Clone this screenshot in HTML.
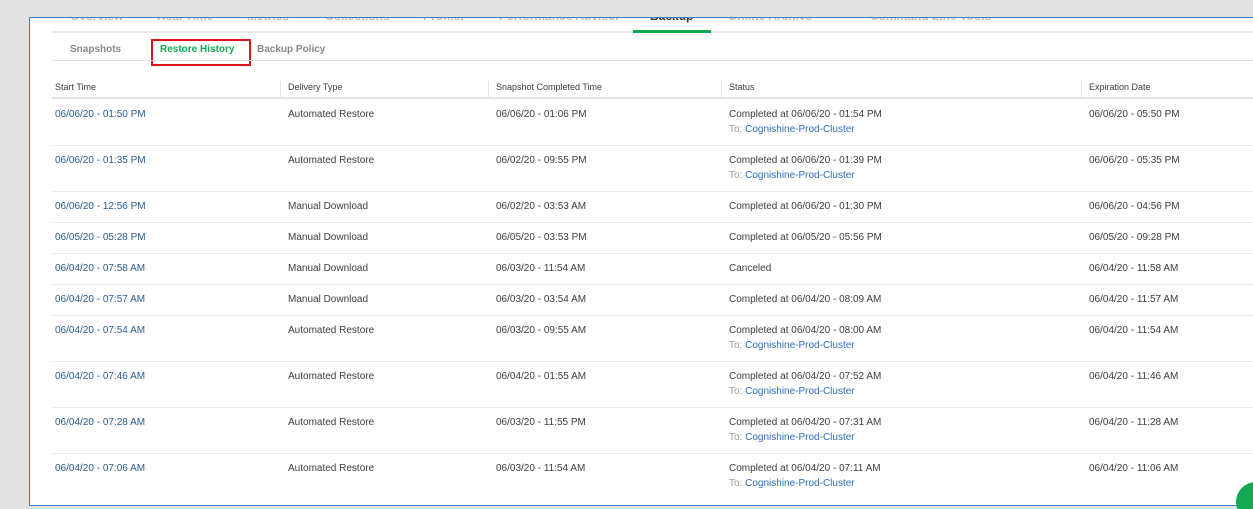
<!DOCTYPE html>
<html><head><style>
*{margin:0;padding:0;box-sizing:border-box}
html,body{width:1253px;height:509px;overflow:hidden}
body{background:#e2e2e2;font-family:"Liberation Sans",Arial,sans-serif;position:relative}
.panel{position:absolute;left:29px;top:17px;width:1230px;height:489px;background:#fff;border-left:1px solid #3d7fc4;border-top:1px solid #3d7fc4;border-bottom:1px solid #3d7fc4;overflow:hidden}
.a{position:absolute;white-space:nowrap}
.nav{top:-9px;font-size:12px;color:#bbb;font-weight:bold}
.t{font-size:10px;color:#3d3d3d}
.d{font-size:10px;color:#2a5b8c}
.l{color:#2d6fb8}
.g{color:#999}
.hl{position:absolute;height:1px;background:#ececec;left:22px;width:1210px}
.sep{position:absolute;top:63px;width:1px;height:16px;background:#e4e4e4}
</style></head><body>
<div class="panel">
<div class="a nav" style="left:40px">Overview</div>
<div class="a nav" style="left:127px">Real Time</div>
<div class="a nav" style="left:217px">Metrics</div>
<div class="a nav" style="left:295px">Collections</div>
<div class="a nav" style="left:393px">Profiler</div>
<div class="a nav" style="left:469px">Performance Advisor</div>
<div class="a nav" style="left:620px;color:#333">Backup</div>
<div class="a nav" style="left:698px">Online Archive</div>
<div class="a nav" style="left:840px">Command Line Tools</div>
<div style="position:absolute;left:22px;top:13px;width:1210px;height:2px;background:#e8e8e8"></div>
<div style="position:absolute;left:603px;top:12px;width:78px;height:3px;background:#13aa52"></div>
<div class="a" style="left:40px;top:26px;font-size:10px;color:#888;font-weight:bold">Snapshots</div>
<div class="a" style="left:130px;top:26px;font-size:10px;color:#13aa52;font-weight:bold">Restore History</div>
<div class="a" style="left:227px;top:26px;font-size:10px;color:#888;font-weight:bold">Backup Policy</div>
<div style="position:absolute;left:121px;top:21px;width:100px;height:27px;border:2px solid #e0141c"></div>
<div class="hl" style="top:42px;background:#e2e2e2"></div>
<div class="a t" style="left:25px;top:64px;font-size:9px">Start Time</div>
<div class="a t" style="left:258px;top:64px;font-size:9px">Delivery Type</div>
<div class="a t" style="left:466px;top:64px;font-size:9px">Snapshot Completed Time</div>
<div class="a t" style="left:699px;top:64px;font-size:9px">Status</div>
<div class="a t" style="left:1059px;top:64px;font-size:9px">Expiration Date</div>
<div class="sep" style="left:250px"></div><div class="sep" style="left:458px"></div><div class="sep" style="left:691px"></div><div class="sep" style="left:1051px"></div>
<div class="hl" style="top:79px;height:2px;background:#e3e3e3"></div>
<div id="rows"></div>
</div>
<div style="position:absolute;left:1236px;top:482px;width:40px;height:40px;border-radius:50%;background:#13aa52"></div>
<script>
var R=[["06/06/20 - 01:50 PM","Automated Restore","06/06/20 - 01:06 PM","Completed at 06/06/20 - 01:54 PM",1,"06/06/20 - 05:50 PM"],
["06/06/20 - 01:35 PM","Automated Restore","06/02/20 - 09:55 PM","Completed at 06/06/20 - 01:39 PM",1,"06/06/20 - 05:35 PM"],
["06/06/20 - 12:56 PM","Manual Download","06/02/20 - 03:53 AM","Completed at 06/06/20 - 01:30 PM",0,"06/06/20 - 04:56 PM"],
["06/05/20 - 05:28 PM","Manual Download","06/05/20 - 03:53 PM","Completed at 06/05/20 - 05:56 PM",0,"06/05/20 - 09:28 PM"],
["06/04/20 - 07:58 AM","Manual Download","06/03/20 - 11:54 AM","Canceled",0,"06/04/20 - 11:58 AM"],
["06/04/20 - 07:57 AM","Manual Download","06/03/20 - 03:54 AM","Completed at 06/04/20 - 08:09 AM",0,"06/04/20 - 11:57 AM"],
["06/04/20 - 07:54 AM","Automated Restore","06/03/20 - 09:55 AM","Completed at 06/04/20 - 08:00 AM",1,"06/04/20 - 11:54 AM"],
["06/04/20 - 07:46 AM","Automated Restore","06/04/20 - 01:55 AM","Completed at 06/04/20 - 07:52 AM",1,"06/04/20 - 11:46 AM"],
["06/04/20 - 07:28 AM","Automated Restore","06/03/20 - 11:55 PM","Completed at 06/04/20 - 07:31 AM",1,"06/04/20 - 11:28 AM"],
["06/04/20 - 07:06 AM","Automated Restore","06/03/20 - 11:54 AM","Completed at 06/04/20 - 07:11 AM",1,"06/04/20 - 11:06 AM"]];
var y=81,h="";
R.forEach(function(r,i){var ty=y+10;
h+='<div class="a d" style="left:25px;top:'+ty+'px">'+r[0]+'</div>';
h+='<div class="a t" style="left:258px;top:'+ty+'px">'+r[1]+'</div>';
h+='<div class="a t" style="left:466px;top:'+ty+'px">'+r[2]+'</div>';
h+='<div class="a t" style="left:699px;top:'+ty+'px">'+r[3]+'</div>';
if(r[4])h+='<div class="a t" style="left:699px;top:'+(ty+15)+'px"><span class="g">To: </span><span class="l">Cognishine-Prod-Cluster</span></div>';
h+='<div class="a t" style="left:1059px;top:'+ty+'px">'+r[5]+'</div>';
y+=r[4]?46:31;
if(i<R.length-1)h+='<div class="hl" style="top:'+y+'px"></div>';});
document.getElementById('rows').innerHTML=h;
</script>
</body></html>
